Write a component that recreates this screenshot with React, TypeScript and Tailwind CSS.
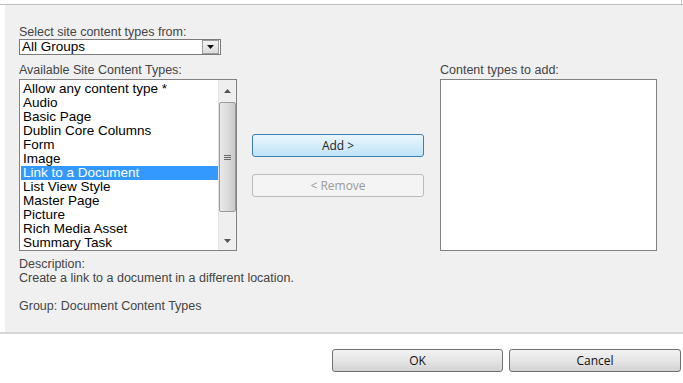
import React from "react";

const items = [
  "Allow any content type *",
  "Audio",
  "Basic Page",
  "Dublin Core Columns",
  "Form",
  "Image",
  "Link to a Document",
  "List View Style",
  "Master Page",
  "Picture",
  "Rich Media Asset",
  "Summary Task",
];

export default function App() {
  const label = "text-[12.5px] leading-[14px] text-[#444] whitespace-nowrap";
  const sans = { fontFamily: "'Liberation Sans', Arial, sans-serif" };
  return (
    <div
      className="w-[683px] h-[383px] bg-white flex flex-col overflow-hidden"
      style={{ fontFamily: "'Open Sans', 'Liberation Sans', sans-serif" }}
    >
      <div className="h-[5px] border-b border-[#bdbdbd] shrink-0">
        <div className="h-[4px] w-[682px] border-r border-[#c4c4c4]" />
      </div>
      <div className="flex shrink-0">
        <div className="w-[5px] bg-white shrink-0" />
        <div className="flex-1 h-[327px] bg-[#f0f0f0] pl-[14px] pt-[20px]" style={sans}>
          <div className={label}>Select site content types from:</div>
          <div className="w-[202px] h-[16px] bg-white border border-[#7a7a7a] flex items-center justify-between pl-[2px] pr-[1px]">
            <span className="text-[13.5px] leading-[14px] text-black">All Groups</span>
            <div className="w-[17px] h-[14px] bg-gradient-to-b from-[#f2f2f2] to-[#dcdcdc] border border-[#9c9c9c] flex items-center justify-center">
              <svg width="7" height="4" viewBox="0 0 7 4">
                <path d="M0 0 L7 0 L3.5 4 Z" fill="#111" />
              </svg>
            </div>
          </div>

          <div className="flex items-start mt-[8px]">
            <div className="w-[218px] shrink-0">
              <div className={`${label} mb-[2px]`}>Available Site Content Types:</div>
              <div className="h-[172px] bg-white border border-[#828282] flex overflow-hidden">
                <div className="flex-1 pt-[2px] pl-[1px]">
                  {items.map((it) => (
                    <div
                      key={it}
                      className={
                        "h-[14px] text-[13.5px] leading-[14px] pl-[2px] whitespace-nowrap " +
                        (it === "Link to a Document"
                          ? "bg-[#3399ff] text-white"
                          : "text-black")
                      }
                    >
                      {it}
                    </div>
                  ))}
                </div>
                <div className="w-[18px] shrink-0 bg-[#efefef] border-l border-[#e2e2e2] flex flex-col">
                  <div className="h-[22px] flex items-center justify-center">
                    <svg width="7" height="4" viewBox="0 0 7 4">
                      <path d="M0 4 L7 4 L3.5 0 Z" fill="#555" />
                    </svg>
                  </div>
                  <div className="h-[110px] rounded-[2px] border border-[#9a9a9a] bg-gradient-to-r from-[#eaeaea] via-[#dcdcdc] to-[#c9c9c9] flex items-center justify-center">
                    <div className="flex flex-col gap-[1px]">
                      <div className="w-[7px] h-[1px] bg-[#666]" />
                      <div className="w-[7px] h-[1px] bg-[#666]" />
                      <div className="w-[7px] h-[1px] bg-[#666]" />
                    </div>
                  </div>
                  <div className="flex-1 flex items-end justify-center pb-[7px]">
                    <svg width="7" height="4" viewBox="0 0 7 4">
                      <path d="M0 0 L7 0 L3.5 4 Z" fill="#555" />
                    </svg>
                  </div>
                </div>
              </div>
              <div className={`${label} mt-[6px]`}>
                <div>Description:</div>
                <div>Create a link to a document in a different location.</div>
                <div className="mt-[14px]">Group: Document Content Types</div>
              </div>
            </div>

            <div
              className="w-[172px] shrink-0 ml-[15px] mt-[71px] flex flex-col gap-[17px]"
              style={{ fontFamily: "'Open Sans', sans-serif" }}
            >
              <button className="h-[23px] rounded-[3px] border border-[#3c7fb1] bg-gradient-to-b from-[#eaf6fd] to-[#bfe4f8] text-[12px] text-[#222]">
                Add &gt;
              </button>
              <button className="h-[23px] rounded-[3px] border border-[#b8bcbf] bg-[#f4f4f4] text-[12px] text-[#9a9a9a]">
                &lt; Remove
              </button>
            </div>

            <div className="w-[217px] shrink-0 ml-[16px]">
              <div className={`${label} mb-[2px]`}>Content types to add:</div>
              <div className="h-[172px] bg-white border border-[#828282]" />
            </div>
          </div>
        </div>
      </div>
      <div className="h-[2px] bg-[#d6d6d6] shrink-0" />
      <div className="flex justify-end gap-[6px] pt-[15px] pr-[2px]">
        <button className="w-[171px] h-[23px] rounded-[3px] border border-[#707070] bg-gradient-to-b from-[#f2f2f2] via-[#e6e6e6] to-[#d2d2d2] text-[12px] text-[#111]">
          OK
        </button>
        <button className="w-[172px] h-[23px] rounded-[3px] border border-[#707070] bg-gradient-to-b from-[#f2f2f2] via-[#e6e6e6] to-[#d2d2d2] text-[12px] text-[#111]">
          Cancel
        </button>
      </div>
    </div>
  );
}
